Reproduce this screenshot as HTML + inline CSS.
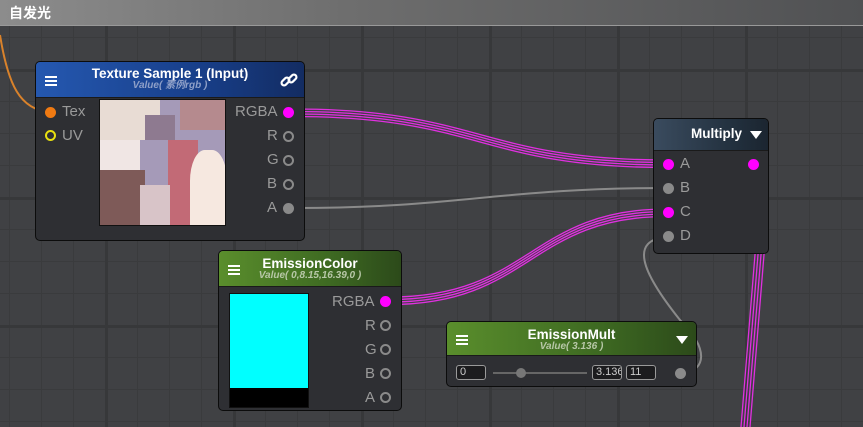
<!DOCTYPE html>
<html><head><meta charset="utf-8"><style>
*{margin:0;padding:0;box-sizing:border-box}
body{width:863px;height:427px;overflow:hidden;position:relative;font-family:"Liberation Sans","Noto Sans CJK SC",sans-serif;
background-color:#404144;
background-image:
linear-gradient(90deg,transparent 96px,#37383a 96px,#37383a 99px,transparent 99px),
linear-gradient(0deg,transparent 0,transparent 125px,#37383a 125px,#37383a 128px,transparent 128px),
linear-gradient(90deg,transparent 31px,#3a3b3d 31px),
linear-gradient(0deg,transparent 31px,#3a3b3d 31px);
background-size:128px 128px,128px 128px,32px 32px,32px 32px;
background-position:9px 0,0 69px,10px 0,0 5px;}
.top{position:absolute;left:0;top:0;width:863px;height:26px;background:linear-gradient(90deg,#8c8c8c,#6e6e6e 40%,#505153);border-bottom:1px solid #999;color:#fff;font-weight:bold;font-size:14px;padding:3px 0 0 9px}
.node{position:absolute;background:#2e2f33;border:1px solid #0c0c0c;border-radius:5px;overflow:hidden;color:#9a9a9a;font-size:15px}
.hd{position:relative;border-bottom:1px solid #1a1a1a;color:#fff;font-weight:bold;font-size:13.5px;text-align:center}
.sub{font-style:italic;font-size:10px;color:#8fa0c8;font-weight:bold;line-height:10px}
.menu{position:absolute;left:9px;width:12px;height:2px;background:#fff;box-shadow:0 4px 0 #fff,0 8px 0 #fff}
.lbl{position:absolute;font-size:15px;color:#9a9a9a}
.dot{position:absolute;width:11px;height:11px;border-radius:50%}
.m{background:#f0f}.g{background:#8a8a8a}.o{border:2px solid #8a8a8a}
.tri{position:absolute;width:0;height:0;border-left:6px solid transparent;border-right:6px solid transparent;border-top:8px solid #fff}
.in{position:absolute;height:15px;border:1px solid #9a9a9a;border-radius:3px;background:#1c1c1e;color:#ccc;font-size:11px;padding-left:3px;line-height:13px;overflow:hidden}
</style></head><body>
<div class="top">自发光</div>
<svg width="863" height="427" style="position:absolute;left:0;top:0">
<path d="M0,35 C8,85 20,110 50,112" stroke="#d9822b" stroke-width="2" fill="none"/>
<path d="M295,208 C460,208 500,188 667,188" stroke="#8a8a8a" stroke-width="2" fill="none"/>
<path d="M667,237 C630,240 640,270 680,320 C710,350 705,370 684,373" stroke="#8a8a8a" stroke-width="2" fill="none"/>
<g stroke="#e030e0" stroke-width="1.3" fill="none">
<path d="M293,109 C480,109 480,160 667,160"/><path d="M293,111.5 C480,111.5 480,162.5 667,162.5"/><path d="M293,114 C480,114 480,165 667,165"/><path d="M293,116.5 C480,116.5 480,167.5 667,167.5"/>
<path d="M390,297 C530,297 530,209 667,209"/><path d="M390,299.5 C530,299.5 530,211.5 667,211.5"/><path d="M390,302 C530,302 530,214 667,214"/><path d="M390,304.5 C530,304.5 530,216.5 667,216.5"/>
<path d="M753,160 C768,160 768,170 766,230 L750,427"/><path d="M753,162.5 C765,162.5 765,172 763,230 L747,427"/><path d="M753,165 C762,165 762,174 760,230 L744,427"/><path d="M753,167.5 C759,167.5 759,176 757,230 L741,427"/>
</g>
</svg>

<div class="node" style="left:35px;top:61px;width:270px;height:180px">
<div class="hd" style="height:36px;background:linear-gradient(90deg,#2558b0,#183f8a 60%,#132c62);padding-top:4px">
<div class="menu" style="top:14px"></div>
Texture Sample 1 (Input)<div class="sub">Value( 素例rgb )</div>
<svg style="position:absolute;right:6px;top:9px" width="18" height="18" viewBox="0 0 18 18"><g stroke="#fff" stroke-width="2.2" fill="none"><rect x="1" y="8" width="9" height="5" rx="2.5" transform="rotate(-45 5.5 10.5)"/><rect x="8" y="5" width="9" height="5" rx="2.5" transform="rotate(-45 12.5 7.5)"/></g></svg>
</div>
<div class="dot" style="left:9px;top:45px;background:#f07a12"></div><div class="lbl" style="left:26px;top:41px">Tex</div>
<div class="dot" style="left:9px;top:68px;border:2px solid #e8e010"></div><div class="lbl" style="left:26px;top:65px">UV</div>
<div style="position:absolute;left:63px;top:37px;width:127px;height:127px;border:1px solid #111;overflow:hidden;background:#a59ab8">
<div style="position:absolute;left:0;top:0;width:60px;height:40px;background:#e8dcd4"></div>
<div style="position:absolute;left:80px;top:0;width:47px;height:30px;background:#b58a8e"></div>
<div style="position:absolute;left:0;top:40px;width:40px;height:35px;background:#f0e6e4"></div>
<div style="position:absolute;left:0;top:70px;width:45px;height:57px;background:#7e5a58"></div>
<div style="position:absolute;left:68px;top:40px;width:30px;height:87px;background:#c26a76"></div>
<div style="position:absolute;left:90px;top:50px;width:37px;height:77px;background:#f6e8e0;border-radius:40% 40% 0 0"></div>
<div style="position:absolute;left:40px;top:85px;width:30px;height:42px;background:#d8c4c8"></div>
<div style="position:absolute;left:45px;top:15px;width:30px;height:25px;background:#8e7a90"></div>
</div>
<div class="lbl" style="left:199px;top:41px">RGBA</div><div class="dot m" style="left:247px;top:45px"></div>
<div class="lbl" style="left:231px;top:65px">R</div><div class="dot o" style="left:247px;top:69px"></div>
<div class="lbl" style="left:231px;top:89px">G</div><div class="dot o" style="left:247px;top:93px"></div>
<div class="lbl" style="left:231px;top:113px">B</div><div class="dot o" style="left:247px;top:117px"></div>
<div class="lbl" style="left:231px;top:137px">A</div><div class="dot g" style="left:247px;top:141px"></div>
</div>

<div class="node" style="left:653px;top:118px;width:116px;height:136px">
<div class="hd" style="height:32px;background:linear-gradient(90deg,#3a4b5e,#22303e 70%,#1b2530);padding:7px 26px 0 0;text-align:right">Multiply<div class="tri" style="right:6px;top:12px"></div></div>
<div class="dot m" style="left:9px;top:40px"></div><div class="lbl" style="left:26px;top:36px">A</div>
<div class="dot m" style="left:94px;top:40px"></div>
<div class="dot g" style="left:9px;top:64px"></div><div class="lbl" style="left:26px;top:60px">B</div>
<div class="dot m" style="left:9px;top:88px"></div><div class="lbl" style="left:26px;top:84px">C</div>
<div class="dot g" style="left:9px;top:112px"></div><div class="lbl" style="left:26px;top:108px">D</div>
</div>

<div class="node" style="left:218px;top:250px;width:184px;height:161px">
<div class="hd" style="height:36px;background:linear-gradient(90deg,#5a8e2c,#3e6a22 60%,#2c4a1a);padding-top:5px">
<div class="menu" style="top:14px"></div>EmissionColor<div class="sub" style="color:#b8c8a8">Value( 0,8.15,16.39,0 )</div></div>
<div style="position:absolute;left:10px;top:42px;width:80px;height:115px;border:1px solid #111;background:#000"><div style="height:94px;background:#0ff"></div></div>
<div class="lbl" style="left:113px;top:42px">RGBA</div><div class="dot m" style="left:161px;top:45px"></div>
<div class="lbl" style="left:146px;top:66px">R</div><div class="dot o" style="left:161px;top:69px"></div>
<div class="lbl" style="left:146px;top:90px">G</div><div class="dot o" style="left:161px;top:93px"></div>
<div class="lbl" style="left:146px;top:114px">B</div><div class="dot o" style="left:161px;top:117px"></div>
<div class="lbl" style="left:146px;top:138px">A</div><div class="dot o" style="left:161px;top:141px"></div>
</div>

<div class="node" style="left:446px;top:321px;width:251px;height:66px">
<div class="hd" style="height:34px;background:linear-gradient(90deg,#5a8e2c,#3e6a22 60%,#2c4a1a);padding-top:5px">
<div class="menu" style="top:13px"></div>EmissionMult<div class="sub" style="color:#b8c8a8">Value( 3.136 )</div><div class="tri" style="right:8px;top:14px"></div></div>
<div class="in" style="left:9px;top:43px;width:30px">0</div>
<div style="position:absolute;left:46px;top:50px;width:94px;height:2px;background:#666"></div>
<div style="position:absolute;left:69px;top:46px;width:10px;height:10px;border-radius:50%;background:#777"></div>
<div class="in" style="left:145px;top:43px;width:30px">3.136</div>
<div class="in" style="left:179px;top:43px;width:30px">11</div>
<div class="dot g" style="left:228px;top:46px"></div>
</div>
</body></html>
